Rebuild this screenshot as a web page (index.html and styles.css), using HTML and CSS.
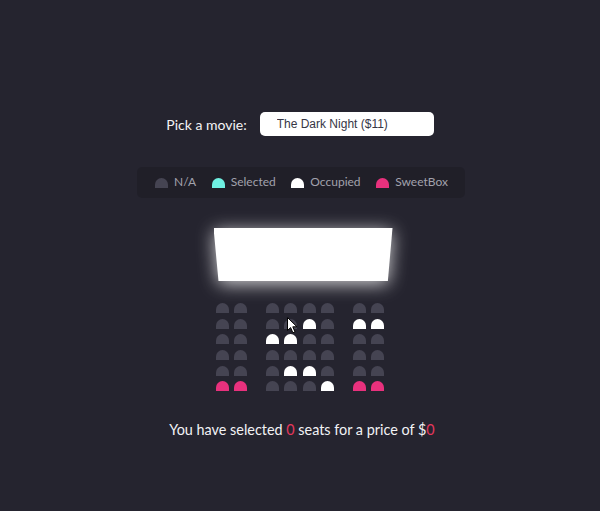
FILE: index.html
```html
<!DOCTYPE html>
<html lang="en">
<head>
<meta charset="utf-8">
<title>Movie Seat Booking</title>
<link rel="stylesheet" href="styles.css">
</head>
<body>
<div class="app">
  <div class="movie-row">
    <label class="movie-label" for="movie">Pick a movie:</label>
    <select class="movie-select" id="movie">
      <option>The Dark Night ($11)</option>
      <option>Fight Club ($9)</option>
      <option>Inception ($10)</option>
    </select>
  </div>

  <ul class="showcase">
    <li class="legend-item"><span class="seat"></span><small class="legend-text">N/A</small></li>
    <li class="legend-item"><span class="seat selected"></span><small class="legend-text">Selected</small></li>
    <li class="legend-item"><span class="seat occupied"></span><small class="legend-text">Occupied</small></li>
    <li class="legend-item"><span class="seat sweetbox"></span><small class="legend-text">SweetBox</small></li>
  </ul>

  <div class="screen-wrap"><div class="screen"></div></div>

  <div class="seats">
    <div class="row"><span class="seat"></span><span class="seat"></span><span class="seat"></span><span class="seat"></span><span class="seat"></span><span class="seat"></span><span class="seat"></span><span class="seat"></span></div>
    <div class="row"><span class="seat"></span><span class="seat"></span><span class="seat"></span><span class="seat"></span><span class="seat occupied"></span><span class="seat"></span><span class="seat occupied"></span><span class="seat occupied"></span></div>
    <div class="row"><span class="seat"></span><span class="seat"></span><span class="seat occupied"></span><span class="seat occupied"></span><span class="seat"></span><span class="seat"></span><span class="seat"></span><span class="seat"></span></div>
    <div class="row"><span class="seat"></span><span class="seat"></span><span class="seat"></span><span class="seat"></span><span class="seat"></span><span class="seat"></span><span class="seat"></span><span class="seat"></span></div>
    <div class="row"><span class="seat"></span><span class="seat"></span><span class="seat"></span><span class="seat occupied"></span><span class="seat occupied"></span><span class="seat"></span><span class="seat"></span><span class="seat"></span></div>
    <div class="row"><span class="seat sweetbox"></span><span class="seat sweetbox"></span><span class="seat"></span><span class="seat"></span><span class="seat"></span><span class="seat occupied"></span><span class="seat sweetbox"></span><span class="seat sweetbox"></span></div>
    <svg class="cursor" width="11" height="17" viewBox="0 0 11 17" aria-hidden="true">
      <path d="M0.5 0.5 L0.5 13.5 L3.6 10.6 L5.9 15.8 L8 14.9 L5.8 9.8 L10 9.8 Z" fill="#ffffff" stroke="#000000" stroke-width="1" stroke-linejoin="round"/>
    </svg>
  </div>

  <p class="text">You have selected <span class="count">0</span> seats for a price of $<span class="count">0</span></p>
</div>
</body>
</html>
```

FILE: styles.css
```css
* {
  box-sizing: border-box;
}

html, body {
  margin: 0;
  padding: 0;
}

body {
  background: #25242f;
  color: #ffffff;
  font-family: Lato, "Noto Sans", sans-serif;
  width: 600px;
  height: 511px;
  overflow: hidden;
}

.app {
  display: flex;
  flex-direction: column;
  align-items: center;
  padding-top: 112px;
}

.movie-row {
  display: flex;
  align-items: center;
  height: 24px;
}

.movie-label {
  font-size: 14px;
  color: #f4f4f6;
  margin-right: 13px;
}

.movie-select {
  appearance: none;
  -webkit-appearance: none;
  width: 174px;
  height: 24px;
  border: 0;
  border-radius: 5px;
  background: #ffffff;
  color: #363645;
  font-family: "Liberation Sans", Arial, sans-serif;
  font-size: 12px;
  padding: 0 0 0 17px;
  outline: none;
}

.showcase {
  list-style: none;
  margin: 31px 0 0 0;
  width: 328px;
  height: 31px;
  padding: 0 17px 0 18px;
  display: flex;
  align-items: center;
  justify-content: space-between;
  background: rgba(0, 0, 0, 0.13);
  border-radius: 5px;
  margin-left: 2px;
}

.legend-item {
  display: flex;
  align-items: center;
}

.legend-text {
  font-size: 12px;
  color: #a2a2ad;
  margin-left: 6px;
  position: relative;
  top: -1px;
}

.seat {
  display: block;
  width: 13px;
  height: 10px;
  background: #454452;
  border-radius: 7px 7px 0 0;
}

.seat.selected {
  background: #6ff0e2;
}

.seat.occupied {
  background: #ffffff;
}

.seat.sweetbox {
  background: #e8317d;
}

.screen-wrap {
  margin-top: 30px;
  margin-left: 6px;
  width: 179px;
  height: 53px;
  filter: drop-shadow(0 3px 9px rgba(255, 255, 255, 0.8));
}

.screen {
  width: 100%;
  height: 100%;
  background: #ffffff;
  clip-path: polygon(0 0, 100% 0, 97.4% 100%, 2.8% 100%);
}

.seats {
  position: relative;
  margin-top: 22px;
  display: flex;
  flex-direction: column;
  gap: 5.7px;
}

.row {
  display: flex;
  gap: 5.3px;
}

.row .seat:nth-child(3),
.row .seat:nth-child(7) {
  margin-left: 13.4px;
}

.cursor {
  position: absolute;
  left: 71px;
  top: 14px;
}

.text {
  margin: 31px 0 0 4px;
  font-size: 14.4px;
  line-height: 16.8px;
  color: #f2f2f5;
}

.count {
  color: #e4375c;
}
```
